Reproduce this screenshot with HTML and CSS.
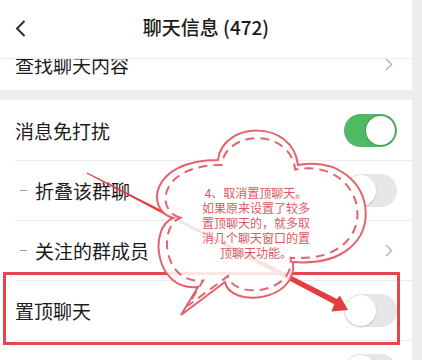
FILE: index.html
```html
<!DOCTYPE html>
<html lang="zh">
<head>
<meta charset="utf-8">
<link rel="stylesheet" href="styles.css">
</head>
<body>
<div class="screen">
  <header class="topbar">
    <span class="back"><svg width="11" height="17" viewBox="0 0 11 17"><path d="M9.5 1 L2 8.5 L9.5 16" fill="none" stroke="#222" stroke-width="1.8"/></svg></span>
    <h1 class="title">聊天信息 (472)</h1>
    <span></span>
  </header>
  <div class="cut">
    <div class="row shifted"><span class="label">查找聊天内容</span><span class="chev"><svg width="8" height="13" viewBox="0 0 8 13"><path d="M1 1 L6.5 6.5 L1 12" fill="none" stroke="#b8b8b8" stroke-width="1.5"/></svg></span></div>
  </div>
  <div class="gap"></div>
  <section class="group">
    <div class="row"><span class="label">消息免打扰</span><span class="switch on"></span></div>
    <div class="row"><span class="label"><i class="dash"></i>折叠该群聊</span><span class="switch"></span></div>
    <div class="row"><span class="label"><i class="dash"></i>关注的群成员</span><span class="chev"><svg width="8" height="13" viewBox="0 0 8 13"><path d="M1 1 L6.5 6.5 L1 12" fill="none" stroke="#b8b8b8" stroke-width="1.5"/></svg></span></div>
    <div class="row"><span class="label">置顶聊天</span><span class="switch"></span></div>
    <div class="row"><span class="label">保存到通讯录</span><span class="switch"></span></div>
  </section>

  <div class="annot">
    <div class="redbox"></div>
    <svg class="draw" width="412" height="360" viewBox="0 0 412 360">
      <polygon points="87.3,172.4 337,298.9 339.8,295.5 348,310 331.4,311.5 334.2,304.2 86.7,173.6" fill="#e43d41"/>
      <path d="M173,218 C145,210 150,160 218,160 C222,122 292,118 298,165 C380,150 398,270 293,262 C298,302 230,308 225,282 L181,315 L198,287 C155,292 148,228 173,218 Z" fill="rgba(255,255,255,0.86)" stroke="#e2636b" stroke-width="2"/>
      <path d="M173,218 C145,210 150,160 218,160 C222,122 292,118 298,165 C380,150 398,270 293,262 C298,302 230,308 225,282 L181,315 L198,287 C155,292 148,228 173,218 Z" transform="translate(263 215) scale(0.92 0.91) translate(-263 -215)" fill="none" stroke="#e2636b" stroke-width="2" stroke-dasharray="9 6" vector-effect="non-scaling-stroke"/>
    </svg>
    <div class="note">4、取消置顶聊天。<br>如果原来设置了较多<br>置顶聊天的，就多取<br>消几个聊天窗口的置<br>顶聊天功能。</div>
  </div>
</div>
</body>
</html>
```
FILE: styles.css
```css
* { box-sizing: border-box; margin: 0; padding: 0; }
body {
  background: #ededed;
  font-family: "Noto Sans CJK SC", "Noto Sans", sans-serif;
  width: 422px;
  height: 360px;
  overflow: hidden;
}
.screen {
  position: relative;
  width: 412px;
  height: 360px;
  overflow: hidden;
  background: #ededed;
}
.topbar {
  height: 59px;
  background: #fff;
  border-bottom: 1px solid #ececec;
  display: grid;
  grid-template-columns: 1fr auto 1fr;
  align-items: center;
  padding: 0 15px;
}
.back { display: flex; align-items: center; height: 17px; margin-top: -2px; }
.title {
  font-size: 19px;
  font-weight: 500;
  color: #1b1b1b;
  line-height: 1;
  margin-top: -6px;
}
.cut {
  height: 31px;
  overflow: hidden;
  background: #fff;
}
.shifted { margin-top: -25px; }
.gap { height: 10px; }
.group { background: #fff; }
.row {
  height: 60px;
  margin-left: 15px;
  padding-right: 15px;
  display: flex;
  align-items: center;
  justify-content: space-between;
  background: #fff;
}
.group .row + .row { border-top: 1px solid #ececec; }
.label {
  display: flex;
  align-items: center;
  font-size: 19px;
  color: #1c1c1c;
  line-height: 1;
}
.dash {
  display: block;
  width: 7px;
  height: 1px;
  background: #9a9a9a;
  margin: 0 8px 0 5px;
}
.chev { display: flex; margin-right: 4px; }
.switch {
  position: relative;
  width: 53px;
  height: 33px;
  border-radius: 17px;
  background: #e6e6e6;
}
.switch::after {
  content: "";
  position: absolute;
  left: 1px;
  top: 1px;
  width: 31px;
  height: 31px;
  border-radius: 50%;
  background: #fff;
  box-shadow: 0 1px 2px rgba(0,0,0,0.18);
}
.switch.on { background: #4fba63; }
.switch.on::after {
  left: auto;
  right: 2px;
  top: 2px;
  width: 29px;
  height: 29px;
  box-shadow: 0 0 0 1px #3f9e52;
}
.annot {
  position: absolute;
  left: 0;
  top: 0;
  width: 412px;
  height: 360px;
  pointer-events: none;
}
.redbox {
  position: absolute;
  left: 3px;
  top: 272px;
  width: 397px;
  height: 73px;
  border: 3px solid #e2474b;
}
.draw { position: absolute; left: 0; top: 0; }
.note {
  position: absolute;
  left: 196px;
  top: 185px;
  width: 120px;
  text-align: center;
  font-size: 12px;
  line-height: 15px;
  color: #dc5a63;
}
```
